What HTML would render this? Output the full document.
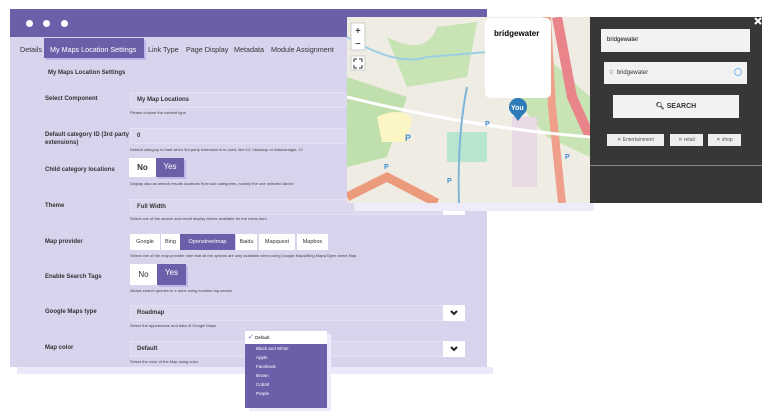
<!DOCTYPE html>
<html><head><style>
*{margin:0;padding:0;box-sizing:border-box}
body{width:768px;height:417px;background:#fff;font-family:"Liberation Sans",sans-serif;position:relative;overflow:hidden}
.a{position:absolute}
.lbl{position:absolute;left:45px;font-size:6px;color:#333;font-weight:bold}
.inp{position:absolute;left:130px;width:335px;height:16px;background:#dcd9ef;border:1px solid #e4e1f4;font-size:6px;padding:4px 6px;color:#333;font-weight:bold}
.help{position:absolute;left:130px;font-size:4px;color:#444}
.arr{position:absolute;left:443px;width:22px;height:16px;background:#fff}
.arr svg{position:absolute;left:7px;top:5px}
.pb{position:absolute;top:234px;height:16px;background:#fff;font-size:5.5px;line-height:16px;text-align:center;color:#333}
.tab{position:absolute;top:45px;font-size:7.2px;color:#333}
.dd div{height:9px;font-size:4.5px;color:#fff;padding-left:11px;line-height:9px}
</style></head><body>
<div class="a" style="left:17px;top:367px;width:476px;height:7px;background:#ece9fa"></div>
<div class="a" style="left:10px;top:9px;width:477px;height:28px;background:#6a60aa"></div>
<div class="a" style="left:26px;top:20px;width:7px;height:7px;border-radius:50%;background:#fff"></div>
<div class="a" style="left:43px;top:20px;width:7px;height:7px;border-radius:50%;background:#fff"></div>
<div class="a" style="left:61px;top:20px;width:7px;height:7px;border-radius:50%;background:#fff"></div>
<div class="a" style="left:10px;top:37px;width:477px;height:330px;background:#d8d4ee"></div>
<div class="tab" style="left:20px">Details</div>
<div class="a" style="left:44px;top:38px;width:100px;height:20px;background:#6a60aa;box-shadow:2px 2px 0 #bdb6e6"></div>
<div class="tab" style="left:50px;color:#fff">My Maps Location Settings</div>
<div class="tab" style="left:148px">Link Type</div>
<div class="tab" style="left:186px">Page Display</div>
<div class="tab" style="left:234px">Metadata</div>
<div class="tab" style="left:271px">Module Assignment</div>
<div class="lbl" style="left:48px;top:70px">My Maps Location Settings</div>
<div class="lbl" style="top:96px">Select Component</div>
<div class="inp" style="top:92px">My Map Locations</div>
<div class="help" style="top:110px">Please choose the content type</div>
<div class="lbl" style="top:131px;width:85px;line-height:8px">Default category ID (3rd party extensions)</div>
<div class="inp" style="top:128px">0</div>
<div class="help" style="top:147px">Default category to load when 3rd party extension is in used, like K2, hikashop or Adsmanager, Cl</div>
<div class="lbl" style="top:167px">Child category locations</div>
<div class="a" style="left:129px;top:158px;width:27px;height:19px;background:#fff;font-size:8px;line-height:19px;text-align:center;font-weight:bold;color:#333">No</div>
<div class="a" style="left:156px;top:158px;width:28px;height:19px;background:#6a60aa;box-shadow:2px 2px 0 #bdb6e6;font-size:8px;line-height:17px;text-align:center;color:#fff">Yes</div>
<div class="help" style="top:181px">Display also as search results locations from sub categories, notonly the one selected above</div>
<div class="lbl" style="top:203px">Theme</div>
<div class="inp" style="top:199px">Full Width</div>
<div class="arr" style="top:199px"><svg width="8" height="6"><path d="M1 1L4 4L7 1" stroke="#222" stroke-width="2" fill="none"/></svg></div>
<div class="help" style="top:216px">Select one of the search and result display theme available for the menu item</div>
<div class="lbl" style="top:239px">Map provider</div>
<div class="pb" style="left:130px;width:30px">Google</div>
<div class="pb" style="left:161px;width:19px">Bing</div>
<div class="pb" style="left:180px;width:55px;background:#6a60aa;color:#fff">Openstreetmap</div>
<div class="pb" style="left:236px;width:21px">Baidu</div>
<div class="pb" style="left:259px;width:36px">Mapquest</div>
<div class="pb" style="left:297px;width:31px">Mapbox</div>
<div class="help" style="top:253px">Select one of the map provider note that all the options are only available when using Google Maps/Bing Maps/Open street Map</div>
<div class="lbl" style="top:274px">Enable Search Tags</div>
<div class="a" style="left:130px;top:264px;width:27px;height:21px;background:#fff;font-size:8px;line-height:21px;text-align:center;color:#333">No</div>
<div class="a" style="left:157px;top:264px;width:29px;height:21px;background:#6a60aa;box-shadow:2px 2px 0 #bdb6e6;font-size:8px;line-height:18px;text-align:center;color:#fff">Yes</div>
<div class="help" style="top:288px">Allows search queries to e done using location tag names</div>
<div class="lbl" style="top:309px">Google Maps type</div>
<div class="inp" style="top:305px">Roadmap</div>
<div class="arr" style="top:305px"><svg width="8" height="6"><path d="M1 1L4 4L7 1" stroke="#222" stroke-width="2" fill="none"/></svg></div>
<div class="help" style="top:323px">Select the appearance and data of Google Maps</div>
<div class="lbl" style="top:345px">Map color</div>
<div class="inp" style="top:341px">Default</div>
<div class="arr" style="top:341px"><svg width="8" height="6"><path d="M1 1L4 4L7 1" stroke="#222" stroke-width="2" fill="none"/></svg></div>
<div class="help" style="top:359px">Select the color of the Map using color</div>
<div class="a" style="left:249px;top:334px;width:82px;height:77px;background:#eeeafc"></div>
<div class="a dd" style="left:245px;top:331px;width:82px;height:77px;background:#6a60aa;padding-top:13px">
<div>Black and White</div><div>Apple</div><div>Facebook</div><div>Brown</div><div>Cobalt</div><div>Purple</div></div>
<div class="a" style="left:245px;top:331px;width:82px;height:13px;background:#fff;font-size:4.5px;line-height:13px;padding-left:3px"><span style="color:#6a60aa;font-size:7px">✓</span> Default</div>
<!-- map -->
<div class="a" style="left:354px;top:203px;width:240px;height:8px;background:#eeebfb"></div>
<svg class="a" style="left:347px;top:17px" width="243" height="186" viewBox="0 0 243 186">
<rect width="243" height="186" fill="#efece4"/>
<path d="M40 20 Q80 40 90 10 L130 5 L120 60 L60 70 Z" fill="#c8e4b4"/>
<path d="M0 60 L60 80 L40 140 L0 150 Z" fill="#bfe0ac"/>
<path d="M150 60 L200 40 L243 80 L243 140 L200 120 Z" fill="#c8e4b4"/>
<path d="M30 100 Q50 90 65 100 L60 125 L35 125 Z" fill="#fbf6c4"/>
<rect x="100" y="115" width="40" height="30" fill="#b8e6cf"/>
<rect x="165" y="100" width="25" height="70" fill="#e8d9e4"/>
<path d="M0 180 L40 160 L90 186" stroke="#ec9a7c" stroke-width="9" fill="none"/>
<path d="M210 0 L225 80 L243 120" stroke="#e8848a" stroke-width="10" fill="none"/>
<path d="M200 0 L205 90 L215 186" stroke="#f0a08a" stroke-width="8" fill="none"/>
<path d="M0 80 Q120 110 243 120" stroke="#fff" stroke-width="3" fill="none"/>
<path d="M120 70 Q110 120 112 186" stroke="#7fb6d8" stroke-width="2" fill="none"/>
<path d="M0 20 Q50 50 80 40 L140 35" stroke="#9ccfe4" stroke-width="2" fill="none"/>
<rect x="4" y="6" width="14" height="27" fill="#fff" stroke="#ccc"/>
<text x="8" y="17" font-size="10" font-family="Liberation Sans">+</text>
<text x="8" y="30" font-size="10" font-family="Liberation Sans">−</text>
<rect x="4" y="39" width="14" height="14" fill="#fff" stroke="#ccc"/>
<path d="M7 45V42H10M12 42H15V45M15 48V51H12M10 51H7V48" stroke="#333" stroke-width="1" fill="none"/>
<rect x="138" y="1" width="66" height="80" rx="5" fill="#fff"/>
<text x="147" y="19" font-size="8" font-weight="bold" font-family="Liberation Sans">bridgewater</text>
<circle cx="171" cy="90" r="9" fill="#2d7bb8"/>
<path d="M165 96 L171 104 L177 96Z" fill="#2d7bb8"/>
<text x="164" y="93" font-size="7" font-weight="bold" fill="#fff" font-family="Liberation Sans">You</text>
<text x="58" y="124" font-size="9" fill="#3d8ed6" font-weight="bold" font-family="Liberation Sans">P</text>
<text x="138" y="109" font-size="7" fill="#3d8ed6" font-weight="bold" font-family="Liberation Sans">P</text>
<text x="37" y="152" font-size="7" fill="#3d8ed6" font-weight="bold" font-family="Liberation Sans">P</text>
<text x="100" y="166" font-size="7" fill="#3d8ed6" font-weight="bold" font-family="Liberation Sans">P</text>
<text x="218" y="142" font-size="7" fill="#3d8ed6" font-weight="bold" font-family="Liberation Sans">P</text>
</svg>
<div class="a" style="left:590px;top:17px;width:172px;height:186px;background:#353834"></div>
<div class="a" style="left:590px;top:165px;width:172px;height:1px;background:#888"></div>
<svg class="a" style="left:754px;top:17px" width="8" height="8"><path d="M1 1L7 7M7 1L1 7" stroke="#fff" stroke-width="2"/></svg>
<div class="a" style="left:601px;top:29px;width:149px;height:23px;background:#f2f2f2;font-size:6px;padding:8px 6px">bridgewater</div>
<div class="a" style="left:604px;top:62px;width:143px;height:22px;background:#f2f2f2;font-size:6px;padding:7px 5px;color:#333"><span style="color:#999">⚲</span>&nbsp;&nbsp;bridgewater<span style="position:absolute;right:5px;top:6px;width:8px;height:8px;border-radius:50%;border:1px solid #7bb8ea"></span></div>
<div class="a" style="left:613px;top:95px;width:126px;height:23px;background:#f2f2f2;font-size:7px;font-weight:bold;text-align:center;line-height:23px;color:#333">🔍︎ SEARCH</div>
<div class="a" style="left:607px;top:134px;width:57px;height:12px;background:#eee;font-size:5px;line-height:12px;text-align:center;color:#555">✕ Entertainment</div>
<div class="a" style="left:670px;top:134px;width:33px;height:12px;background:#eee;font-size:5px;line-height:12px;text-align:center;color:#555">✕ retail</div>
<div class="a" style="left:708px;top:134px;width:33px;height:12px;background:#eee;font-size:5px;line-height:12px;text-align:center;color:#555">✕ shop</div>
</body></html>
